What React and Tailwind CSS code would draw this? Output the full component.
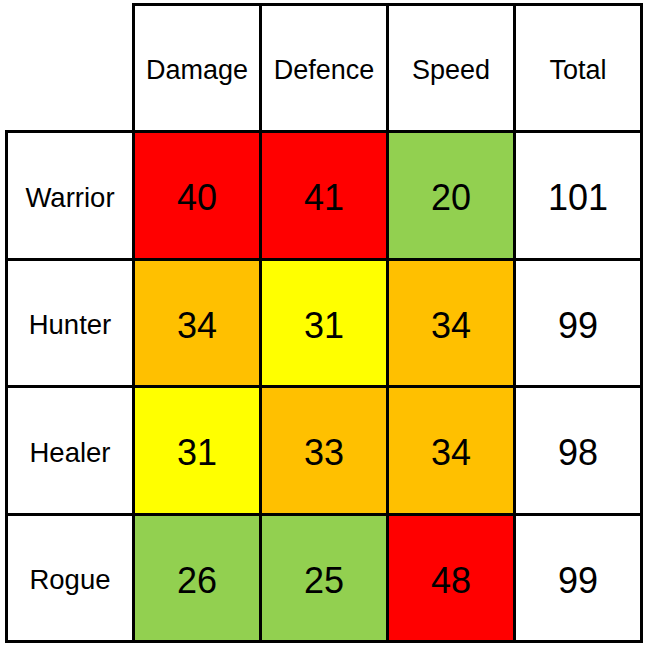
const headers = ['Damage', 'Defence', 'Speed', 'Total']

const rows = [
  { name: 'Warrior', h: 'h-[128px]', cells: [[40, 'bg-[#ff0000]'], [41, 'bg-[#ff0000]'], [20, 'bg-[#92d050]']], total: 101 },
  { name: 'Hunter', h: 'h-[127px]', cells: [[34, 'bg-[#ffc000]'], [31, 'bg-[#ffff00]'], [34, 'bg-[#ffc000]']], total: 99 },
  { name: 'Healer', h: 'h-[128px]', cells: [[31, 'bg-[#ffff00]'], [33, 'bg-[#ffc000]'], [34, 'bg-[#ffc000]']], total: 98 },
  { name: 'Rogue', h: 'h-[127px]', cells: [[26, 'bg-[#92d050]'], [25, 'bg-[#92d050]'], [48, 'bg-[#ff0000]']], total: 99 },
]

export default function App() {
  return (
    <div className="w-[646px] h-[646px] bg-white pl-[5px] pt-[3px] text-black font-['Liberation_Sans',Arial,sans-serif]">
      <div className="grid grid-cols-[130px_127px_127px_127px_127px]">
        {/* header row */}
        <div className="h-[130px] border-r-[3px] border-b-[3px] border-black" />
        {headers.map((h) => (
          <div
            key={h}
            className="h-[130px] pt-[5px] flex items-center justify-center border-t-[3px] border-r-[3px] border-b-[3px] border-black text-[27px]"
          >
            {h}
          </div>
        ))}

        {rows.map((row) => (
          <div key={row.name} className="contents">
            <div className={`${row.h} pt-[4px] flex items-center justify-center border-l-[3px] border-r-[3px] border-b-[3px] border-black text-[27.5px]`}>
              {row.name}
            </div>
            {row.cells.map(([v, bg], i) => (
              <div
                key={i}
                className={`${row.h} ${bg} pt-[5px] flex items-center justify-center border-r-[3px] border-b-[3px] border-black text-[36px]`}
              >
                {v}
              </div>
            ))}
            <div className={`${row.h} pt-[5px] flex items-center justify-center border-r-[3px] border-b-[3px] border-black text-[36px]`}>
              {row.total}
            </div>
          </div>
        ))}
      </div>
    </div>
  )
}
